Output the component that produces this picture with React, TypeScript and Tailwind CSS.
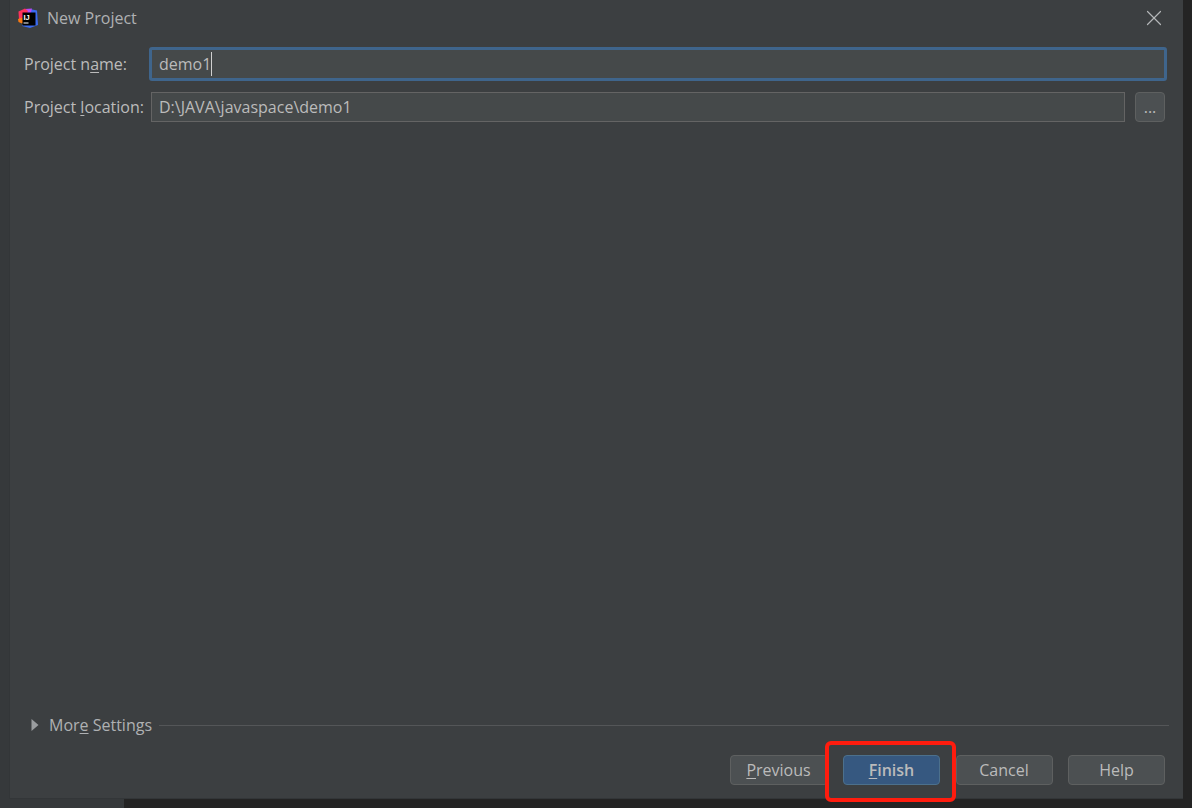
import { X } from 'lucide-react';

function Mnemonic({ children }: { children: string }) {
  return <span className="underline underline-offset-2">{children}</span>;
}

function IdeaLogo() {
  return (
    <svg width="20" height="20" viewBox="0 0 20 20" className="shrink-0">
      <path d="M12 1 L19 2.5 L20 17 L12 20 L4 18 L9 7 Z" fill="#3b6bf0" />
      <path d="M7 1 L14 0.5 L12 8 L6 8 Z" fill="#b74af7" />
      <path d="M0.5 3.5 L7 0.5 L10 3 L5 14 L1 12 Z" fill="#fe315d" />
      <path d="M0 11 L6 9 L7 14 L4 15.5 L0.5 14 Z" fill="#f97a12" />
      <rect x="4.5" y="4.5" width="13" height="13" fill="#000" />
      <rect x="5.5" y="14.5" width="5" height="1" fill="#fff" />
      <text x="5.5" y="11.5" fontSize="7.5" fontWeight="700" fill="#fff" fontFamily="'Liberation Sans', sans-serif">IJ</text>
    </svg>
  );
}

function FooterButton({ primary, wide, children }: { primary?: boolean; wide?: boolean; children: React.ReactNode }) {
  return (
    <button
      className={
        primary
          ? 'w-[97px] h-[30px] rounded-[4px] border border-[#4c708c] bg-[#365880] font-semibold text-[#bbbbbb]'
          : wide
            ? 'w-[98px] h-[30px] rounded-[4px] border border-[#5e6060] bg-[#4c5052] text-[#bbbbbb]'
            : 'w-[97px] h-[30px] rounded-[4px] border border-[#5e6060] bg-[#4c5052] text-[#bbbbbb]'
      }
    >
      {children}
    </button>
  );
}

export default function App() {
  return (
    <div className="relative w-[1192px] h-[808px] flex flex-col overflow-hidden bg-[#242424] text-[16px] text-[#bbbbbb] font-['Open_Sans','Noto_Sans',sans-serif]">
      <div className="flex h-[799px]">
        <div className="w-[9px] bg-[#36393b]" />
        <div className="w-[1174px] flex flex-col bg-[#3c3f41] border-l border-b border-[#333638]">
          <div className="flex items-center h-[36px] pl-[8px] pr-[16px] gap-[9px]">
            <IdeaLogo />
            <span className="text-[#afb1b3]">New Project</span>
            <X size={26} strokeWidth={1.1} className="ml-auto text-[#b4b6b8]" />
          </div>

          <div className="flex items-center h-[34px] mt-[11px] pl-[14px] pr-[16px]">
            <label className="w-[125px] shrink-0">Project n<Mnemonic>a</Mnemonic>me:</label>
            <div className="flex-1 h-[34px] flex items-center pl-[7px] border-[3px] border-[#3f658c] rounded-[3px] bg-[#45494a]">
              <span className="text-[#bbbbbb]">demo1</span>
              <span className="w-px h-[24px] bg-[#d0d0d0]" />
            </div>
          </div>

          <div className="flex items-center h-[30px] mt-[11px] pl-[14px] pr-[18px]">
            <label className="w-[127px] shrink-0">Project <Mnemonic>l</Mnemonic>ocation:</label>
            <div className="flex-1 h-[30px] flex items-center pl-[7px] border border-[#646464] bg-[#45494a]">D:\JAVA\javaspace\demo1</div>
            <button className="w-[30px] h-[30px] ml-[10px] rounded-[4px] border border-[#5e6060] bg-[#4c5052] leading-none">...</button>
          </div>

          <div className="flex-1" />

          <div className="flex items-center h-[20px] pl-[21px] pr-[14px]">
            <svg width="8" height="12" viewBox="0 0 8 12" className="shrink-0 mb-[1px]">
              <path d="M0.5 0 L7.5 6 L0.5 12 Z" fill="#9a9d9f" />
            </svg>
            <span className="ml-[10px] text-[#afb1b3]">Mor<Mnemonic>e</Mnemonic> Settings</span>
            <div className="flex-1 h-px ml-[7px] bg-[#545658]" />
          </div>

          <div className="flex justify-end gap-[15.5px] pr-[18px] pt-[20px] pb-[13px]">
            <FooterButton wide><Mnemonic>P</Mnemonic>revious</FooterButton>
            <FooterButton primary><Mnemonic>F</Mnemonic>inish</FooterButton>
            <FooterButton>Cancel</FooterButton>
            <FooterButton>Help</FooterButton>
          </div>
        </div>
        <div className="w-[9px] bg-[#242424]" />
      </div>
      <div className="flex flex-1">
        <div className="w-[124px] bg-[#36393b]" />
      </div>

      {/* red annotation box drawn over the screenshot */}
      <div className="absolute left-[825px] top-[741px] w-[131px] h-[61px] border-[4px] border-[#ff1c0e] rounded-[6px]" />
    </div>
  );
}
